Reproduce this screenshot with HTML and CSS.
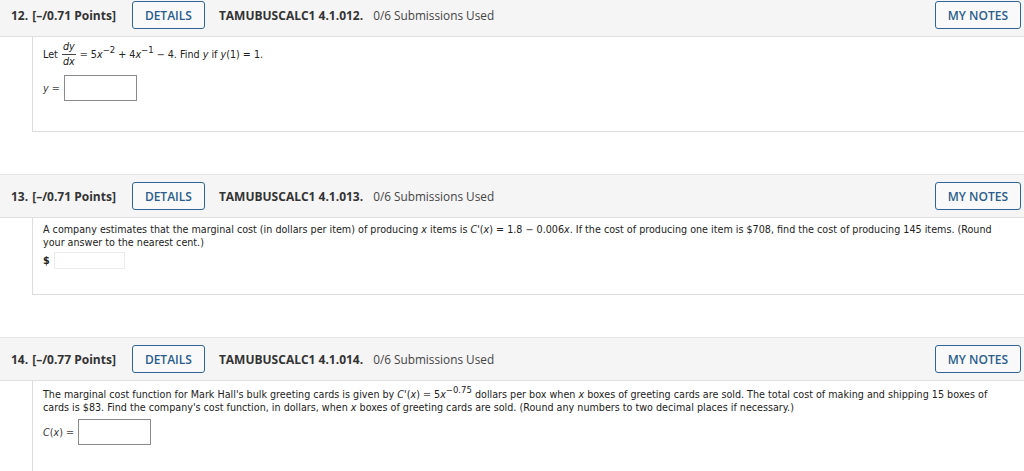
FILE: index.html
```html
<!DOCTYPE html>
<html lang="en">
<head>
    <meta charset="UTF-8">
    <title>Assignment Questions</title>
    <link rel="stylesheet" href="styles.css">
</head>
<body>
<div class="page">

    <!-- Question 12 -->
    <div class="question">
        <div class="q-head">
            <span class="q-num">12.</span>
            <span class="q-points">[&ndash;/0.71 Points]</span>
            <button class="btn">DETAILS</button>
            <span class="q-code">TAMUBUSCALC1 4.1.012.</span>
            <span class="q-subs">0/6 Submissions Used</span>
            <button class="btn btn-notes">MY NOTES</button>
        </div>
        <div class="q-body q12">
            <div class="line">
                Let <span class="frac"><span class="num"><i>dy</i></span><span class="den"><i>dx</i></span></span>
                <span class="eq">=</span> 5<i>x</i><sup>&minus;2</sup> + 4<i>x</i><sup>&minus;1</sup> &minus; 4. Find <i>y</i> if <i>y</i>(1) = 1.
            </div>
            <div class="answer">
                <span class="label"><i>y</i> <span class="eq">=</span></span>
                <input class="box" type="text">
            </div>
        </div>
    </div>

    <!-- Question 13 -->
    <div class="question">
        <div class="q-head">
            <span class="q-num">13.</span>
            <span class="q-points">[&ndash;/0.71 Points]</span>
            <button class="btn">DETAILS</button>
            <span class="q-code">TAMUBUSCALC1 4.1.013.</span>
            <span class="q-subs">0/6 Submissions Used</span>
            <button class="btn btn-notes">MY NOTES</button>
        </div>
        <div class="q-body q13">
            <p>A company estimates that the marginal cost (in dollars per item) of producing <i>x</i> items is <i>C'</i>(<i>x</i>) = 1.8 &minus; 0.006<i>x</i>. If the cost of producing one item is $708, find the cost of producing 145 items. (Round your answer to the nearest cent.)</p>
            <div class="answer">
                <span class="dollar">$</span>
                <input class="box box-faint" type="text">
            </div>
        </div>
    </div>

    <!-- Question 14 -->
    <div class="question">
        <div class="q-head">
            <span class="q-num">14.</span>
            <span class="q-points">[&ndash;/0.77 Points]</span>
            <button class="btn">DETAILS</button>
            <span class="q-code">TAMUBUSCALC1 4.1.014.</span>
            <span class="q-subs">0/6 Submissions Used</span>
            <button class="btn btn-notes">MY NOTES</button>
        </div>
        <div class="q-body q14">
            <p>The marginal cost function for Mark Hall's bulk greeting cards is given by <i>C'</i>(<i>x</i>) <span class="eq">=</span> 5<i>x</i><sup>&minus;0.75</sup> dollars per box when <i>x</i> boxes of greeting cards are sold. The total cost of making and shipping 15 boxes of cards is $83. Find the company's cost function, in dollars, when <i>x</i> boxes of greeting cards are sold. (Round any numbers to two decimal places if necessary.)</p>
            <div class="answer">
                <span class="label"><i>C</i>(<i>x</i>) <span class="eq">=</span></span>
                <input class="box" type="text">
            </div>
        </div>
    </div>

</div>
</body>
</html>
```

FILE: styles.css
```css
/* Page basics */
body {
    margin: 0;
    background: #fff;
    color: #222;
    font-family: "DejaVu Sans", Verdana, sans-serif;
    font-size: 9.6px;
}

.page {
    margin-top: -7px;
}

.question {
    margin-bottom: 42px;
}

/* Question header bar */
.q-head {
    display: flex;
    align-items: center;
    height: 42px;
    padding: 0 3px 0 11px;
    background-color: #f5f5f5;
    border-top: 1px solid #e6e6e6;
    border-bottom: 1px solid #e0e0e0;
    font-family: "Open Sans", sans-serif;
    font-size: 12px;
    color: #333;
}

.q-num {
    font-weight: bold;
    margin-right: 4px;
}

.q-points {
    font-weight: bold;
    margin-right: 16px;
}

.q-code {
    font-weight: bold;
    margin-right: 10px;
}

.q-subs {
    color: #444;
    font-size: 11.8px;
}

.btn {
    height: 28px;
    padding: 0 12px;
    margin-right: 14px;
    background: #f9f9f9;
    border: 1.5px solid #2f6496;
    border-radius: 3px;
    color: #2b5d8c;
    font-family: "Open Sans", sans-serif;
    font-size: 12px;
    font-weight: 600;
}

.btn-notes {
    margin-left: auto;
    margin-right: 0;
}

/* Question body */
.q-body {
    box-sizing: border-box;
    margin-left: 32px;
    border-left: 1px solid #ddd;
    border-bottom: 1px solid #ddd;
    padding: 0 10px 0 10px;
    line-height: 13px;
}

.q-body p {
    margin: 0;
}

.q12 {
    height: 95px;
    padding-top: 4px;
}

.q13 {
    height: 77px;
    padding-top: 5px;
}

.q14 {
    height: 92px;
    padding-top: 7px;
}

sup {
    font-size: 8.5px;
    vertical-align: 5px;
    line-height: 0;
}

.eq {
    color: #666;
}

/* dy/dx fraction */
.frac {
    display: inline-flex;
    flex-direction: column;
    align-items: center;
    vertical-align: middle;
    line-height: 12px;
    margin: 0 1px;
}

.frac .num {
    border-bottom: 1px solid #444;
    padding: 0 1px 1px;
}

.frac .den {
    padding-top: 1px;
}

/* Answer rows */
.answer {
    display: flex;
    align-items: center;
    gap: 4px;
}

.q12 .answer {
    margin-top: 7px;
}

.q13 .answer {
    margin-top: 3px;
}

.q14 .answer {
    margin-top: 5px;
}

.label {
    color: #333;
}

.dollar {
    font-weight: bold;
}

.box {
    width: 73px;
    height: 26px;
    box-sizing: border-box;
    margin: 0;
    border: 1px solid #8a8a8a;
    background: #fff;
}

.box-faint {
    width: 71px;
    height: 17px;
    border-color: #ececec;
}
```
